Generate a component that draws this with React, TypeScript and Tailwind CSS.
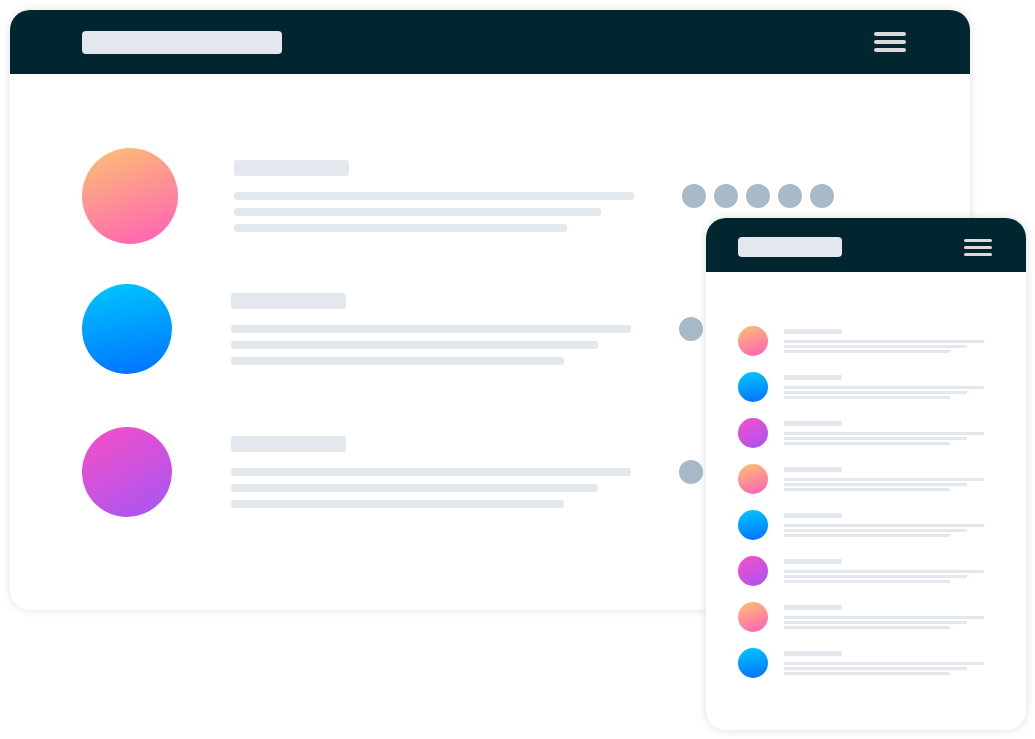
import React from "react";

const ORANGE = "bg-[linear-gradient(160deg,#fcc272_0%,#ff5db8_100%)]";
const BLUE = "bg-[linear-gradient(170deg,#00c8ff_0%,#0070ff_100%)]";
const PURPLE = "bg-[linear-gradient(150deg,#f84fc6_0%,#a455f5_100%)]";

function Hamburger({ big }: { big?: boolean }) {
  if (big) {
    return (
      <div className="flex flex-col gap-[4px]">
        <div className="h-[4px] w-[32px] rounded-full bg-[#dadada]" />
        <div className="h-[4px] w-[32px] rounded-full bg-[#dadada]" />
        <div className="h-[4px] w-[32px] rounded-full bg-[#dadada]" />
      </div>
    );
  }
  return (
    <div className="flex flex-col gap-[4px]">
      <div className="h-[3px] w-[28px] rounded-full bg-[#dadada]" />
      <div className="h-[3px] w-[28px] rounded-full bg-[#dadada]" />
      <div className="h-[3px] w-[28px] rounded-full bg-[#dadada]" />
    </div>
  );
}

function BigRow({
  grad,
  size,
  mt,
}: {
  grad: string;
  size: string;
  mt: string;
}) {
  return (
    <div className={`flex items-center ${mt}`}>
      <div className={`${size} shrink-0 rounded-full ${grad}`} />
      <div className="flex flex-col">
        <div className="h-[16px] w-[115px] rounded-[3px] bg-[#e2e8ee]" />
        <div className="mt-[16px] h-[8px] w-[400px] rounded-[3px] bg-[#e2e8ee]" />
        <div className="mt-[8px] h-[8px] w-[367px] rounded-[3px] bg-[#e2e8ee]" />
        <div className="mt-[8px] h-[8px] w-[333px] rounded-[3px] bg-[#e2e8ee]" />
      </div>
      <div className="ml-[48px] flex gap-[8px]">
        <div className="h-[24px] w-[24px] rounded-full bg-[#a8b9c8]" />
        <div className="h-[24px] w-[24px] rounded-full bg-[#a8b9c8]" />
        <div className="h-[24px] w-[24px] rounded-full bg-[#a8b9c8]" />
        <div className="h-[24px] w-[24px] rounded-full bg-[#a8b9c8]" />
        <div className="h-[24px] w-[24px] rounded-full bg-[#a8b9c8]" />
      </div>
    </div>
  );
}

function SmallRow({ grad }: { grad: string }) {
  return (
    <div className="flex items-center gap-[16px]">
      <div className={`h-[30px] w-[30px] shrink-0 rounded-full ${grad}`} />
      <div className="flex flex-col">
        <div className="h-[5px] w-[58px] rounded-[1px] bg-[#e2e8ee]" />
        <div className="mt-[6px] h-[2.5px] w-[200px] bg-[#e2e8ee]" />
        <div className="mt-[2.5px] h-[2.5px] w-[183px] bg-[#e2e8ee]" />
        <div className="mt-[2.5px] h-[2.5px] w-[166px] bg-[#e2e8ee]" />
      </div>
    </div>
  );
}

export default function App() {
  const smallGrads = [ORANGE, BLUE, PURPLE, ORANGE, BLUE, PURPLE, ORANGE, BLUE];
  return (
    <div className="relative h-[739px] w-[1035px] overflow-hidden bg-white">
      {/* Desktop window */}
      <div className="ml-[10px] mt-[10px] flex h-[600px] w-[960px] flex-col overflow-hidden rounded-[20px] bg-white shadow-[0_0_10px_rgba(0,20,30,0.12)]">
        <div className="flex h-[64px] shrink-0 items-center justify-between bg-[#022630] pl-[72px] pr-[64px]">
          <div className="h-[23px] w-[200px] rounded-[4px] bg-[#e2e8ee]" />
          <Hamburger big />
        </div>
        <div className="flex flex-col pl-[72px]">
          <BigRow grad={ORANGE} size="h-[96px] w-[96px] mr-[56px]" mt="mt-[74px]" />
          <BigRow grad={BLUE} size="h-[90px] w-[90px] mr-[59px]" mt="mt-[40px]" />
          <BigRow grad={PURPLE} size="h-[90px] w-[90px] mr-[59px]" mt="mt-[53px]" />
        </div>
      </div>

      {/* Mobile window */}
      <div className="absolute left-[706px] top-[218px] flex h-[512px] w-[320px] flex-col overflow-hidden rounded-[20px] bg-white shadow-[0_0_10px_rgba(0,20,30,0.14)]">
        <div className="flex h-[54px] shrink-0 items-center justify-between bg-[#022630] pl-[32px] pr-[34px] pt-[4px]">
          <div className="h-[20px] w-[104px] rounded-[4px] bg-[#e2e8ee]" />
          <Hamburger />
        </div>
        <div className="flex flex-col gap-[16px] pl-[32px] pt-[54px]">
          {smallGrads.map((g, i) => (
            <SmallRow key={i} grad={g} />
          ))}
        </div>
      </div>
    </div>
  );
}
